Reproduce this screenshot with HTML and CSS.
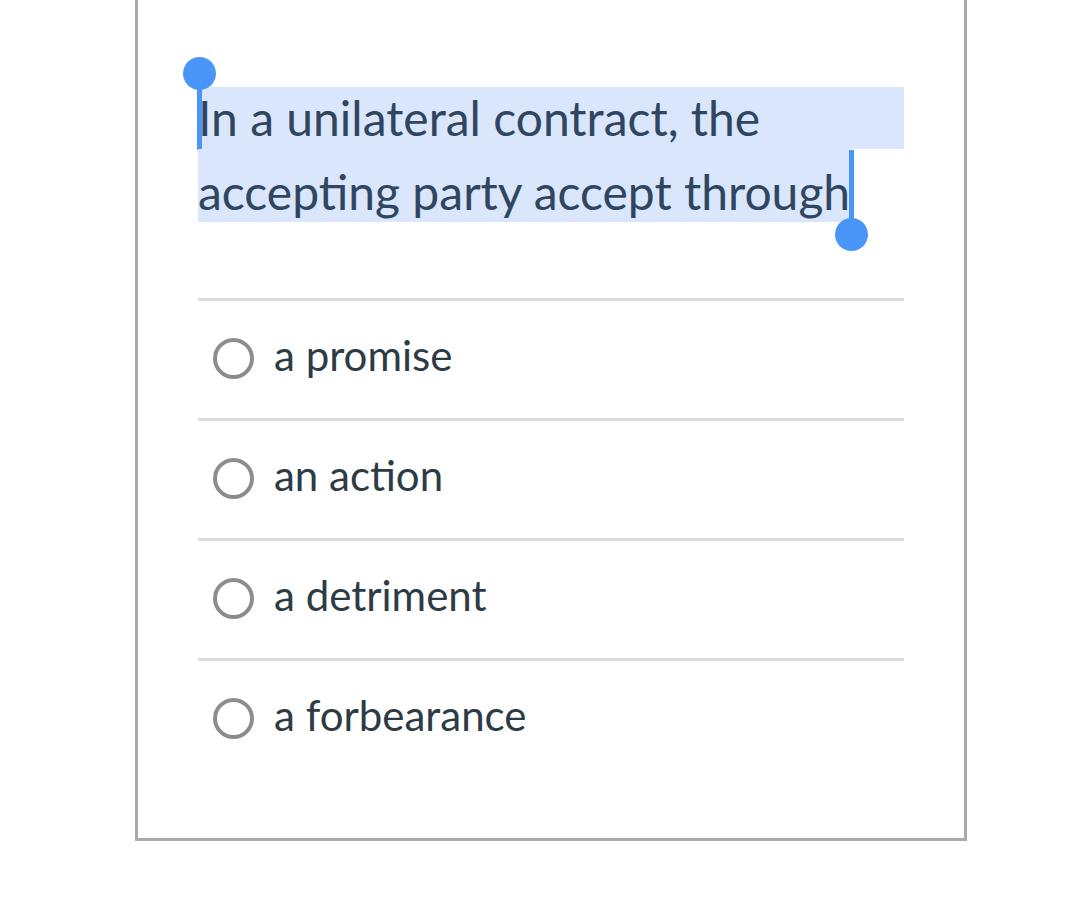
FILE: index.html
```html
<!DOCTYPE html>
<html>
<head>
<meta charset="utf-8">
<link rel="stylesheet" href="styles.css">
</head>
<body>
<div class="card">
  <div class="question">
    <div class="q-line q-line-1"><span class="handle handle-start"><span class="knob"></span><span class="stem"></span></span>In a unilateral contract, the</div>
    <div class="q-line-2-wrap"><span class="q-line q-line-2">accepting party accept through<span class="handle handle-end"><span class="stem"></span><span class="knob"></span></span></span></div>
  </div>
  <ul class="options">
    <li class="option"><span class="radio"></span><span class="label">a promise</span></li>
    <li class="option"><span class="radio"></span><span class="label">an action</span></li>
    <li class="option"><span class="radio"></span><span class="label">a detriment</span></li>
    <li class="option"><span class="radio"></span><span class="label">a forbearance</span></li>
  </ul>
</div>
</body>
</html>
```
FILE: styles.css
```css
html, body {
  margin: 0;
  padding: 0;
  background: #ffffff;
}
body {
  font-family: Lato, "Liberation Sans", sans-serif;
  color: #2d3b45;
}
.card {
  box-sizing: border-box;
  margin-left: 135px;
  width: 832px;
  height: 841px;
  border: 3px solid #aaaaaa;
  border-top: none;
  padding: 87px 60px 0 60px;
}
.question {
  font-size: 48px;
  color: #2f4560;
}
.q-line {
  background: #d9e6fc;
  position: relative;
}
.q-line-1 {
  display: block;
  height: 62px;
  line-height: 62px;
}
.q-line-2-wrap {
  height: 73px;
}
.q-line-2 {
  display: inline-block;
  height: 73px;
  line-height: 59px;
  padding-top: 13px;
  box-sizing: border-box;
  vertical-align: top;
}
.handle {
  position: absolute;
  display: flex;
  flex-direction: column;
  align-items: center;
  width: 33px;
}
.handle-start {
  left: -15px;
  top: -30px;
}
.handle-end {
  right: -18px;
  top: 1px;
}
.knob {
  width: 33px;
  height: 33px;
  border-radius: 50%;
  background: #4a95f8;
  flex: none;
}
.stem {
  width: 5px;
  background: #4a95f8;
  flex: none;
}
.handle-start .stem {
  height: 62px;
  margin-top: -2px;
}
.handle-end .stem {
  height: 70px;
  margin-bottom: -2px;
}
.options {
  list-style: none;
  margin: 76px 0 0 0;
  padding: 0;
}
.option {
  border-top: 3px solid #dcdcdc;
  height: 117px;
  display: flex;
  align-items: center;
  font-size: 42px;
}
.radio {
  box-sizing: border-box;
  width: 41px;
  height: 41px;
  border: 4px solid #8d8d8f;
  border-radius: 50%;
  margin-left: 15px;
  margin-right: 20px;
  margin-bottom: 2px;
  flex: none;
}
.label {
  line-height: 1;
  margin-bottom: 10px;
}
```
